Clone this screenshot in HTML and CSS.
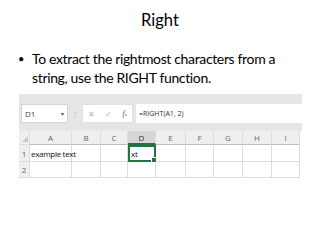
FILE: index.html
```html
<!DOCTYPE html>
<html lang="en">
<head>
    <meta charset="UTF-8">
    <title>Right</title>
    <link rel="stylesheet" href="styles.css">
</head>
<body>
    <div class="slide">
        <h1>Right</h1>
        <ul class="points">
            <li>To extract the rightmost characters from a string, use the RIGHT function.</li>
        </ul>

        <div class="sheet">
            <div class="formula-bar">
                <div class="name-box">D1 <span class="caret">▾</span></div>
                <div class="grip">⋮</div>
                <div class="tools">
                    <span>✕</span>
                    <span>✓</span>
                    <span class="fx">f<small>x</small></span>
                </div>
                <div class="formula">=RIGHT(A1, 2)</div>
            </div>

            <div class="grid">
                <div class="corner"><span></span></div>
                <div class="col">A</div>
                <div class="col">B</div>
                <div class="col">C</div>
                <div class="col active">D</div>
                <div class="col">E</div>
                <div class="col">F</div>
                <div class="col">G</div>
                <div class="col">H</div>
                <div class="col">I</div>

                <div class="row">1</div>
                <div class="cell">example text</div>
                <div class="cell"></div>
                <div class="cell"></div>
                <div class="cell selected">xt</div>
                <div class="cell"></div>
                <div class="cell"></div>
                <div class="cell"></div>
                <div class="cell"></div>
                <div class="cell"></div>

                <div class="row">2</div>
                <div class="cell"></div>
                <div class="cell"></div>
                <div class="cell"></div>
                <div class="cell"></div>
                <div class="cell"></div>
                <div class="cell"></div>
                <div class="cell"></div>
                <div class="cell"></div>
                <div class="cell"></div>
            </div>
        </div>
    </div>
</body>
</html>
```

FILE: styles.css
```css
body {
    margin: 0;
    background: #fff;
    font-family: Lato, "Open Sans", sans-serif;
    color: #000;
}

.slide {
    width: 320px;
    height: 240px;
    overflow: hidden;
}

h1 {
    margin: 0;
    padding-top: 9px;
    font-size: 16.5px;
    font-weight: 400;
    line-height: 22px;
    text-align: center;
}

.points {
    list-style: none;
    margin: 18px 0 0;
    padding: 0 0 0 32px;
    width: 260px;
    font-size: 14px;
    line-height: 19px;
    letter-spacing: -0.35px;
}

.points li {
    position: relative;
}

.points li::before {
    content: "•";
    position: absolute;
    left: -14px;
    font-size: 11px;
}

.sheet {
    margin: 7px 0 0 19px;
    width: 283px;
    padding-top: 10px;
    background: #e6e6e6;
    font-family: "Open Sans", sans-serif;
    font-size: 8px;
    color: #444;
}

.formula-bar {
    display: flex;
    align-items: stretch;
    height: 19px;
    padding-left: 2px;
}

.name-box {
    width: 47px;
    box-sizing: border-box;
    background: #fff;
    border: 1px solid #d4d4d4;
    padding: 0 3px;
    display: flex;
    align-items: center;
    justify-content: space-between;
    font-size: 8px;
}

.caret {
    font-size: 6px;
    color: #555;
}

.grip {
    width: 14px;
    display: flex;
    align-items: center;
    justify-content: center;
    color: #aaa;
    font-size: 8px;
}

.tools {
    width: 51px;
    background: #fff;
    border: 1px solid #e0e0e0;
    box-sizing: border-box;
    display: flex;
    align-items: center;
    justify-content: space-around;
    color: #b0b0b0;
    font-size: 8px;
}

.tools .fx {
    color: #555;
    font-style: italic;
    font-family: "Liberation Serif", serif;
}

.tools .fx small {
    font-size: 5px;
}

.formula {
    flex: 1;
    background: #fff;
    margin-left: 3px;
    padding-left: 3px;
    display: flex;
    align-items: center;
    font-size: 7px;
    color: #333;
}

.grid {
    display: grid;
    grid-template-columns: 11px 42px 29px 27px 28px 30px 28px 29px 29px 28px;
    grid-template-rows: 14px 17px 16px;
    margin-top: 8px;
    background: #fff;
}

.grid > div {
    box-sizing: border-box;
    border-right: 1px solid #dcdcdc;
    border-bottom: 1px solid #dcdcdc;
    white-space: nowrap;
    overflow: visible;
    display: flex;
    align-items: center;
}

.corner,
.col,
.row {
    background: #efefef;
    color: #666;
}

.col {
    justify-content: center;
    border-bottom-color: #bdbdbd !important;
}

.col.active {
    background: #d6d6d6;
    border-bottom: 2px solid #217346 !important;
    color: #333;
}

.row {
    justify-content: center;
}

.corner {
    position: relative;
}

.corner span {
    position: absolute;
    right: 1px;
    bottom: 2px;
    border-left: 6px solid transparent;
    border-bottom: 6px solid #c8c8c8;
}

.cell {
    padding-left: 1px;
    color: #111;
    font-size: 8px;
    letter-spacing: -0.3px;
}

.cell.selected {
    position: relative;
    border: 2px solid #217346 !important;
}

.cell.selected::after {
    content: "";
    position: absolute;
    right: -3px;
    bottom: -3px;
    width: 4px;
    height: 4px;
    background: #217346;
    border: 1px solid #fff;
}
```
